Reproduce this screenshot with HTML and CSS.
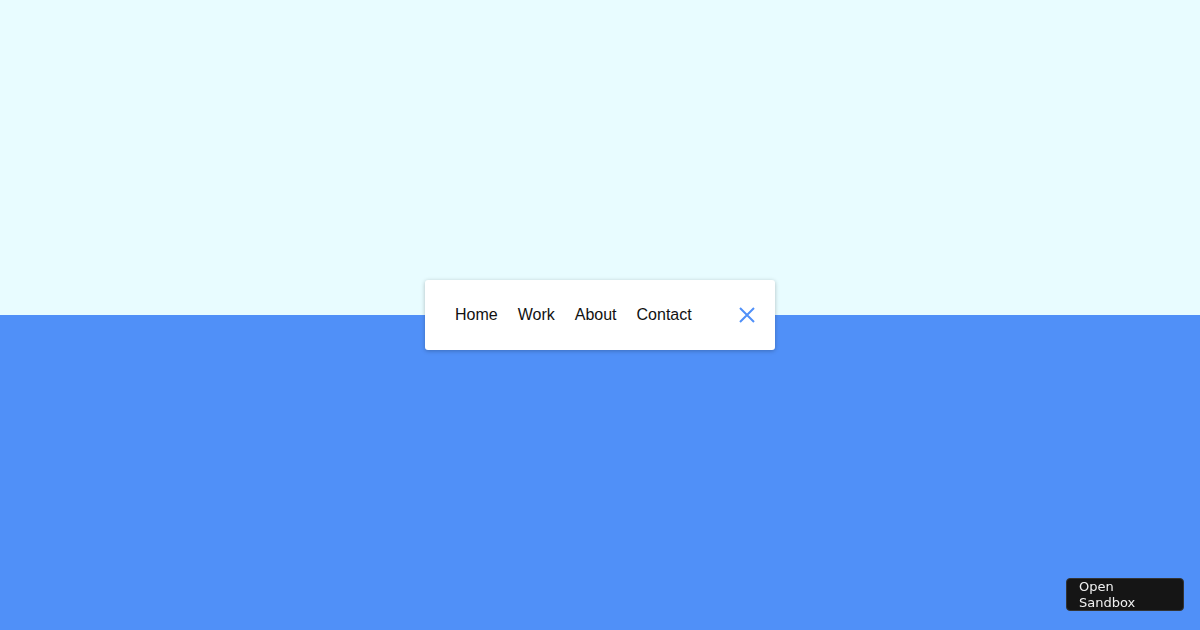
FILE: index.html
```html
<!DOCTYPE html>
<html lang="en">
<head>
<meta charset="utf-8">
<title>Menu</title>
<link rel="stylesheet" href="styles.css">
</head>
<body>
<div class="page">
  <div class="top"></div>
  <div class="bottom"></div>
</div>
<div class="menu">
  <nav class="links">
    <a href="#">Home</a>
    <a href="#">Work</a>
    <a href="#">About</a>
    <a href="#">Contact</a>
  </nav>
  <button class="close" aria-label="Close">
    <svg width="16" height="16" viewBox="0 0 16 16"><path d="M1 1L15 15M15 1L1 15" stroke="#5090f8" stroke-width="2" fill="none"/></svg>
  </button>
</div>
<a class="sandbox" href="#"><span>Open Sandbox</span></a>
</body>
</html>
```
FILE: styles.css
```css
html, body { margin: 0; padding: 0; height: 100%; }
body { font-family: "Liberation Sans", Arial, sans-serif; overflow: hidden; }
.page { display: flex; flex-direction: column; height: 630px; }
.top { height: 315px; background: #e8fcff; }
.bottom { flex: 1; background: #5090f8; }
.menu {
  position: absolute;
  top: 280px;
  left: 425px;
  width: 350px;
  height: 70px;
  box-sizing: border-box;
  background: #fff;
  border-radius: 3px;
  box-shadow: 0 1px 4px rgba(0,0,0,0.25);
  display: flex;
  align-items: center;
  padding: 0 20px 0 30px;
}
.links { display: flex; gap: 20px; }
.links a { color: #111; text-decoration: none; font-size: 16px; line-height: 20px; }
.close {
  margin-left: auto;
  border: 0;
  background: none;
  padding: 0;
  width: 16px;
  height: 16px;
  display: flex;
  cursor: pointer;
}
.sandbox {
  position: fixed;
  right: 16px;
  bottom: 19px;
  width: 118px;
  height: 33px;
  box-sizing: border-box;
  background: #151515;
  border: 1px solid #333;
  border-radius: 4px;
  padding: 1px 12px 0;
  display: flex;
  align-items: center;
  color: #f0f0f0;
  text-decoration: none;
  font-family: "DejaVu Sans", sans-serif;
  font-size: 13px;
  line-height: 16px;
}
.sandbox span { width: 60px; }
```
